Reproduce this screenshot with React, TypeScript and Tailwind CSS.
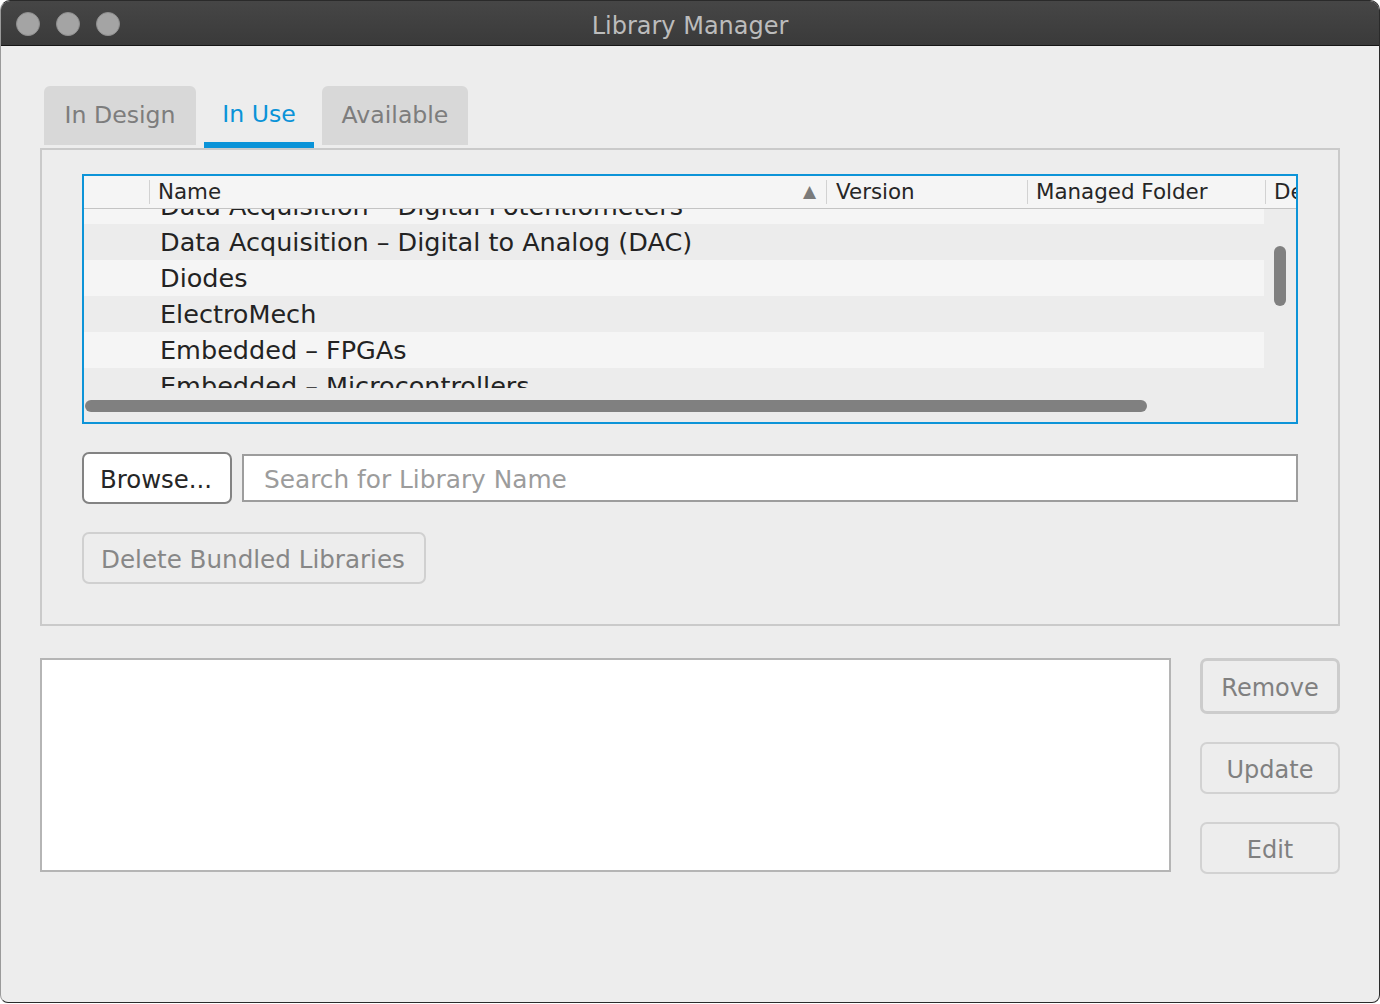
import React from "react";

const font = { fontFamily: '"DejaVu Sans", "Open Sans", sans-serif' };

const rows: { name: string; dark: boolean }[] = [
  { name: "Data Acquisition – Digital Potentiometers", dark: false },
  { name: "Data Acquisition – Digital to Analog (DAC)", dark: true },
  { name: "Diodes", dark: false },
  { name: "ElectroMech", dark: true },
  { name: "Embedded – FPGAs", dark: false },
  { name: "Embedded – Microcontrollers", dark: true },
];

export default function App() {
  return (
    <div className="w-[1380px] h-[1004px] bg-white" style={font}>
      <div className="w-[1380px] h-[1003px] rounded-t-[10px] rounded-b-[8px] border border-[#2a2a2a] border-l-[#9a9a9a] bg-[#ededed] overflow-hidden flex flex-col">
        {/* Title bar */}
        <div className="h-[45px] shrink-0 bg-gradient-to-b from-[#464646] to-[#3a3a3a] border-b border-[#161616] relative flex items-center justify-center pt-[5px]">
          <div className="absolute left-[15px] top-[11px] flex gap-[16px]">
            <div className="w-[24px] h-[24px] rounded-full bg-[#a4a4a4] border border-[#8e8e8e]" />
            <div className="w-[24px] h-[24px] rounded-full bg-[#a4a4a4] border border-[#8e8e8e]" />
            <div className="w-[24px] h-[24px] rounded-full bg-[#a4a4a4] border border-[#8e8e8e]" />
          </div>
          <span className="text-[24px] text-[#bcbcbc] leading-none">Library Manager</span>
        </div>

        {/* Content */}
        <div className="flex flex-col pl-[39px] pr-[39px] pt-[40px]">
          {/* Tabs */}
          <div className="flex items-start gap-[8px] pl-[4px] h-[62px]">
            <div className="h-[59px] w-[152px] bg-[#d8d8d8] rounded-t-[6px] flex items-center justify-center text-[23.6px] text-[#7d7d7d]">
              In Design
            </div>
            <div className="h-[62px] w-[110px] border-b-[6px] border-[#0a93d8] flex items-center justify-center pt-[2px] text-[23.6px] text-[#0a93d8]">
              In Use
            </div>
            <div className="h-[59px] w-[146px] bg-[#d8d8d8] rounded-t-[6px] flex items-center justify-center text-[23.6px] text-[#7d7d7d]">
              Available
            </div>
          </div>

          {/* Panel */}
          <div className="w-[1300px] h-[478px] border-2 border-[#cacaca] bg-[#ededed] pl-[40px] pt-[24px] flex flex-col">
            {/* Table */}
            <div className="w-[1216px] h-[250px] border-2 border-[#0d94d8] flex flex-col overflow-hidden">
              {/* Header */}
              <div className="h-[33px] shrink-0 bg-[#f5f5f5] border-b border-[#c4c4c4] flex items-center text-[21.4px] text-[#262626] overflow-hidden whitespace-nowrap">
                <div className="w-[65px] shrink-0" />
                <div className="w-[677px] shrink-0 h-[24px] border-l border-[#d2d2d2] flex items-center pl-[8px] justify-between pr-[10px]">
                  <span>Name</span>
                  <span className="text-[17px] text-[#7a7a7a]">▲</span>
                </div>
                <div className="w-[201px] shrink-0 h-[24px] border-l border-[#d2d2d2] flex items-center pl-[9px]">
                  Version
                </div>
                <div className="w-[238px] shrink-0 h-[24px] border-l border-[#d2d2d2] flex items-center pl-[8px]">
                  Managed Folder
                </div>
                <div className="w-[40px] shrink-0 h-[24px] border-l border-[#d2d2d2] flex items-center pl-[8px]">
                  Description
                </div>
              </div>
              {/* Body */}
              <div className="flex h-[179px] shrink-0 overflow-hidden">
                <div className="w-[1180px] shrink-0 overflow-hidden">
                  <div className="mt-[-21px]">
                    {rows.map((r) => (
                      <div
                        key={r.name}
                        className={`h-[36px] flex items-center pl-[76px] text-[25.5px] text-[#232323] whitespace-nowrap ${r.dark ? "bg-[#ececec]" : "bg-[#f5f5f5]"}`}
                      >
                        {r.name}
                      </div>
                    ))}
                  </div>
                </div>
                <div className="flex-1 bg-[#ececec] pl-[10px] pt-[37px]">
                  <div className="w-[12px] h-[60px] rounded-full bg-[#808080]" />
                </div>
              </div>
              {/* Horizontal scrollbar */}
              <div className="flex-1 bg-[#ececec] pt-[12px] pl-[1px]">
                <div className="w-[1062px] h-[12px] rounded-full bg-[#808080]" />
              </div>
            </div>

            {/* Browse + search */}
            <div className="flex items-center gap-[10px] mt-[28px]">
              <div className="w-[150px] h-[52px] bg-white border-2 border-[#838383] rounded-[7px] flex items-center pl-[16px] pt-[4px] text-[24.4px] text-[#262626]">
                Browse...
              </div>
              <div className="w-[1056px] h-[48px] bg-white border-2 border-[#9d9d9d] flex items-center pl-[20px] pt-[4px] text-[24.8px] text-[#9c9c9c]">
                Search for Library Name
              </div>
            </div>

            {/* Delete bundled */}
            <div className="mt-[28px] w-[344px] h-[52px] border-2 border-[#d0d0d0] rounded-[7px] flex items-center pl-[17px] pt-[4px] text-[24.6px] text-[#878787]">
              Delete Bundled Libraries
            </div>
          </div>

          {/* Bottom area */}
          <div className="flex mt-[32px] gap-[29px]">
            <div className="w-[1131px] h-[214px] bg-white border-2 border-[#b5b5b5]" />
            <div className="flex flex-col gap-[28px] w-[140px]">
              <div className="h-[56px] border-[3px] border-[#cccccc] rounded-[7px] flex items-center justify-center pt-[4px] text-[24px] text-[#808080]">
                Remove
              </div>
              <div className="h-[52px] border-2 border-[#d2d2d2] rounded-[7px] flex items-center justify-center pt-[4px] text-[24px] text-[#808080]">
                Update
              </div>
              <div className="h-[52px] border-2 border-[#d2d2d2] rounded-[7px] flex items-center justify-center pt-[4px] text-[24px] text-[#808080]">
                Edit
              </div>
            </div>
          </div>
        </div>
      </div>
    </div>
  );
}
